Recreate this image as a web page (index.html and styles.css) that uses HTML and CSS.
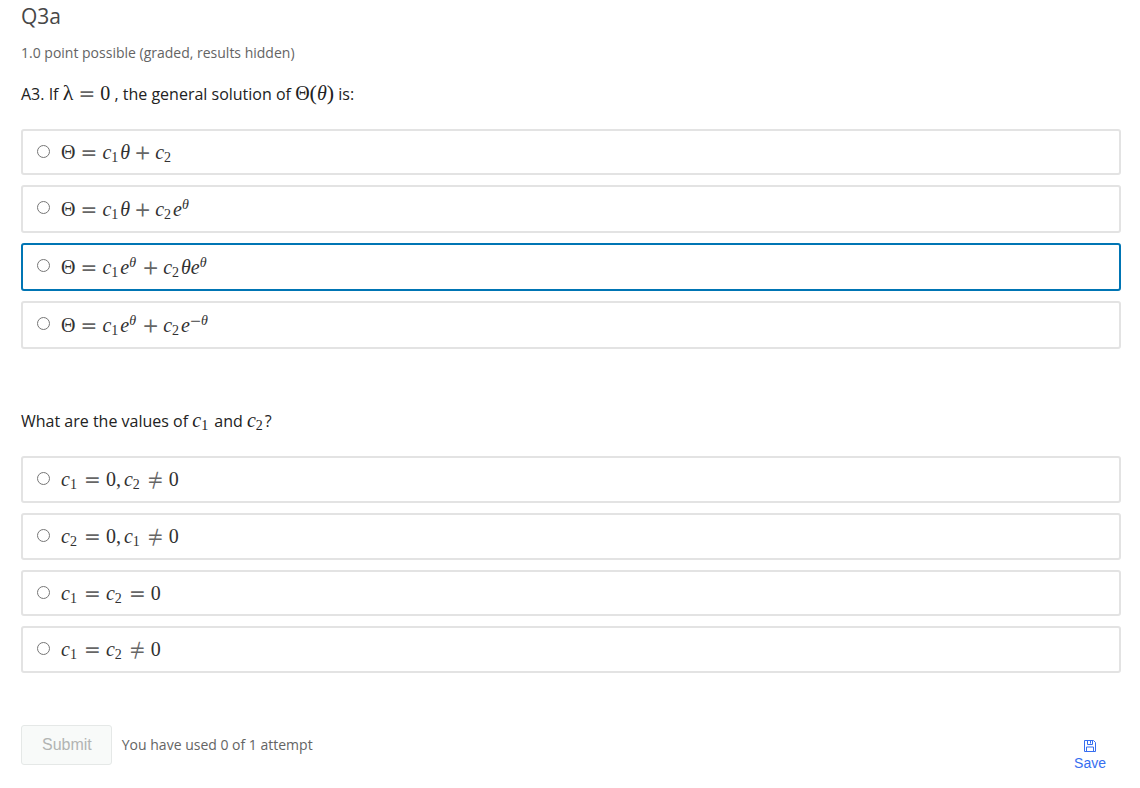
FILE: index.html
```html
<!DOCTYPE html>
<html lang="en">
<head>
<meta charset="utf-8">
<title>Q3a</title>
<link rel="stylesheet" href="styles.css">
</head>
<body>
<main class="problem">
  <h1 class="title">Q3a</h1>
  <p class="progress">1.0 point possible (graded, results hidden)</p>
  <form class="form">
    <fieldset class="group">
      <legend class="question">A3. If <span class="math"><span class="big">λ</span><span class="rel">=</span>0</span> , the general solution of <span class="math"><span class="theta-cap">Θ</span><span class="big">(</span><i>θ</i><span class="big">)</span></span> is:</legend>
      <label class="choice short"><input type="radio" name="solution"><span class="math"><span class="theta-cap">Θ</span><span class="rel">=</span><i>c</i><sub>1</sub><i>θ</i><span class="bin">+</span><i>c</i><sub>2</sub></span></label>
      <label class="choice tall"><input type="radio" name="solution"><span class="math"><span class="theta-cap">Θ</span><span class="rel">=</span><i>c</i><sub>1</sub><i>θ</i><span class="bin">+</span><i>c</i><sub>2</sub><i>e</i><sup><i>θ</i></sup></span></label>
      <label class="choice tall active"><input type="radio" name="solution"><span class="math"><span class="theta-cap">Θ</span><span class="rel">=</span><i>c</i><sub>1</sub><i>e</i><sup><i>θ</i></sup><span class="bin">+</span><i>c</i><sub>2</sub><i>θ</i><i>e</i><sup><i>θ</i></sup></span></label>
      <label class="choice tall"><input type="radio" name="solution"><span class="math"><span class="theta-cap">Θ</span><span class="rel">=</span><i>c</i><sub>1</sub><i>e</i><sup><i>θ</i></sup><span class="bin">+</span><i>c</i><sub>2</sub><i>e</i><sup><span class="minus">−</span><i>θ</i></sup></span></label>
    </fieldset>
    <fieldset class="group">
      <legend class="question">What are the values of <span class="math"><i>c</i><sub>1</sub></span> and <span class="math"><i>c</i><sub>2</sub></span>?</legend>
      <label class="choice"><input type="radio" name="values"><span class="math"><i>c</i><sub>1</sub><span class="rel">=</span>0<span class="comma">,</span><i>c</i><sub>2</sub><span class="rel">≠</span>0</span></label>
      <label class="choice"><input type="radio" name="values"><span class="math"><i>c</i><sub>2</sub><span class="rel">=</span>0<span class="comma">,</span><i>c</i><sub>1</sub><span class="rel">≠</span>0</span></label>
      <label class="choice short"><input type="radio" name="values"><span class="math"><i>c</i><sub>1</sub><span class="rel">=</span><i>c</i><sub>2</sub><span class="rel">=</span>0</span></label>
      <label class="choice"><input type="radio" name="values"><span class="math"><i>c</i><sub>1</sub><span class="rel">=</span><i>c</i><sub>2</sub><span class="rel">≠</span>0</span></label>
    </fieldset>
    <div class="actions">
      <button class="submit" type="submit" disabled>Submit</button>
      <span class="feedback">You have used 0 of 1 attempt</span>
      <button class="save" type="button">
        <svg class="save-icon" viewBox="0 0 12 12" aria-hidden="true"><path d="M.5.5h9l2 2v9H.5zM3.5.5v4h5v-4M6.5 1v2.500M2.500 11.500v-4.500h7v4.500" fill="none" stroke="currentColor"/></svg>
        <span>Save</span>
      </button>
    </div>
  </form>
</main>
</body>
</html>
```
FILE: styles.css
```css
* { box-sizing: border-box; }
body {
  margin: 0;
  background: #fff;
  color: #313131;
  font-family: "Open Sans", "Liberation Sans", sans-serif;
  font-size: 16px;
}
.problem { padding: 0 19px 0 21px; }
.title {
  margin: 0;
  padding-top: 4px;
  color: #474747;
  font-size: 21px;
  font-weight: 400;
  line-height: 24px;
}
.progress {
  margin: 15px 0 0;
  color: #646464;
  font-size: 14px;
  line-height: 20px;
}
.form { margin-top: 17px; }
.group {
  display: flow-root;
  min-width: 0;
  margin: 0;
  padding: 0;
  border: 0;
}
.group + .group { margin-top: 48px; }
.question {
  margin-bottom: 21px;
  padding: 0;
  color: #222;
  line-height: 28px;
}
.choice {
  display: flex;
  align-items: flex-start;
  margin-bottom: 10px;
  padding: 10px 14px;
  border: 2px solid #e3e3e3;
  border-radius: 3px;
}
.choice input {
  flex: none;
  width: 13px;
  height: 13px;
  margin: 4px 11px 0 0;
}
.choice .math { line-height: 23px; }
.choice.short .math { line-height: 22px; }
.choice.tall .math { line-height: 24px; }
.choice.active { border-color: #0075b4; }
.math {
  font-family: "Liberation Serif", serif;
  font-size: 20px;
  line-height: 20px;
  white-space: nowrap;
}
.math sub, .math sup {
  margin-right: 2px;
  font-size: 14px;
  line-height: 0;
}
.math sub { vertical-align: -3px; }
.math sup { vertical-align: 7px; }
.choice .math span { line-height: 0; }
.big { font-size: 22px; }
.theta-cap { font-size: 20px; }
.rel, .bin, .minus {
  color: #666;
  font-family: "DejaVu Math TeX Gyre", "Liberation Serif", serif;
}
.rel, .bin {
  display: inline-block;
  width: 27px;
  text-align: center;
  line-height: 0;
}
.bin { width: 25px; }
.comma { margin-right: 3px; }
.actions {
  display: flex;
  align-items: flex-start;
  margin-top: 42px;
}
.submit {
  padding: 0 19px 0 20px;
  border: 1px solid #e5e8e7;
  border-radius: 3px;
  background: #f8faf9;
  color: #b2b4b3;
  font: 16px/38px "Liberation Sans", sans-serif;
}
.feedback {
  margin-left: 10px;
  color: #646464;
  font-size: 14px;
  line-height: 40px;
}
.save {
  display: flex;
  flex-direction: column;
  align-items: center;
  gap: 2px;
  margin: 15px 15px 0 auto;
  padding: 0;
  border: 0;
  background: none;
  color: #366ef0;
  font: 14px/18px "Liberation Sans", sans-serif;
}
.save-icon { width: 12px; height: 12px; }
```
